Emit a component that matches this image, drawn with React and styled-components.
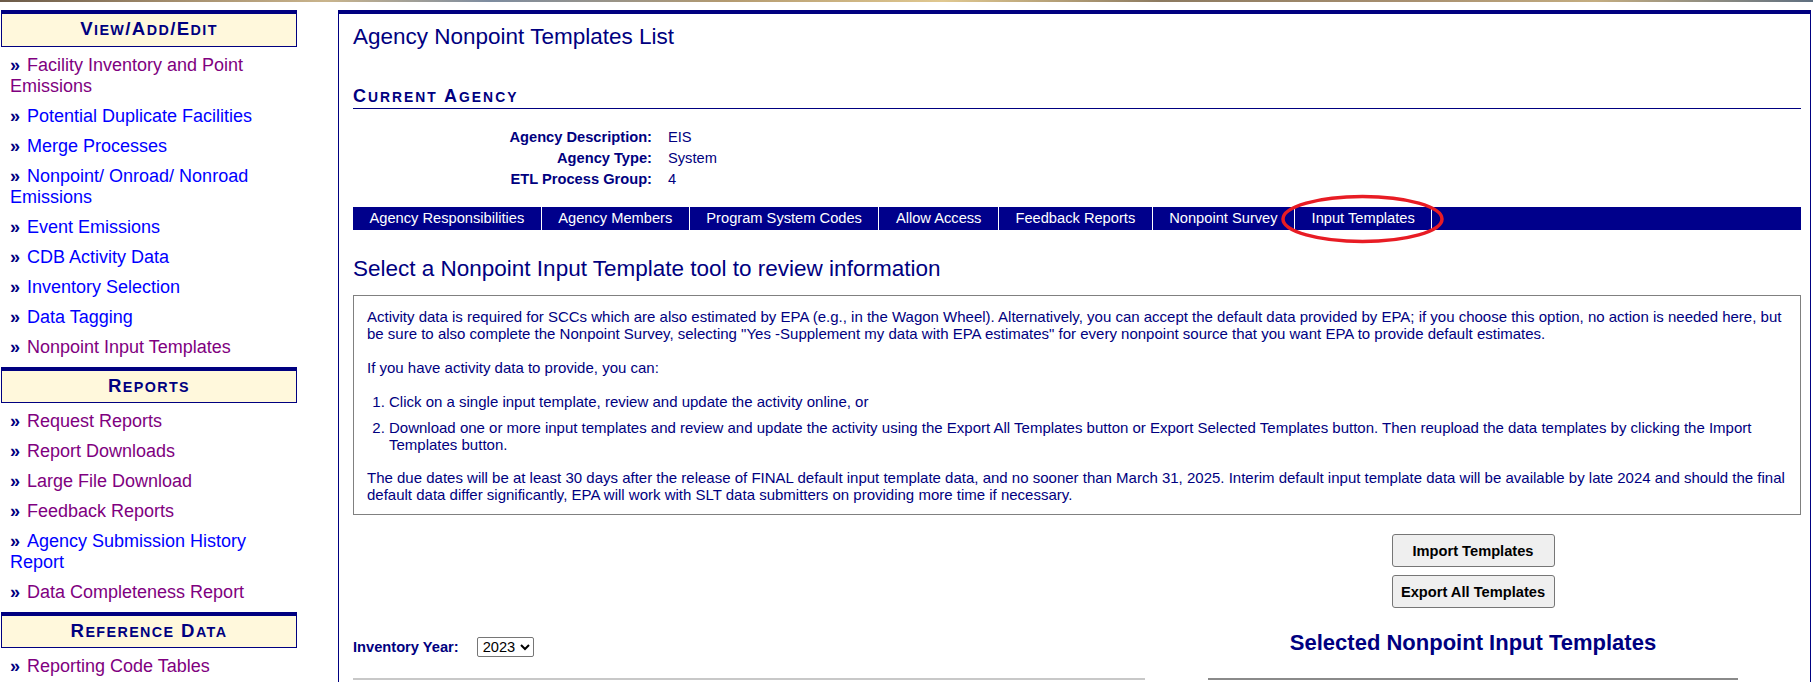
import React from "react";
import styled, { createGlobalStyle } from "styled-components";

const NAVY = "#000080";

const GlobalStyle = createGlobalStyle`
  html, body {
    margin: 0;
    padding: 0;
    background: #ffffff;
  }
  body {
    font-family: "Liberation Sans", Arial, sans-serif;
    color: ${NAVY};
  }
`;

const Banner = styled.div`
  height: 2px;
  background: linear-gradient(
    90deg,
    #6b5a48 0%,
    #a08a6a 9%,
    #c9b48c 18%,
    #7d8ca0 27%,
    #b39a70 40%,
    #e0c890 52%,
    #8c7a60 64%,
    #a89070 78%,
    #c4ad80 88%,
    #5f6f80 100%
  );
`;

const Page = styled.div`
  display: flex;
  align-items: stretch;
  gap: 41px;
  padding: 8px 2px 0 1px;
  min-height: calc(100vh - 10px);
`;

// lowercase runs are drawn as smaller capitals, like the site's small-caps headings
const Lower = styled.span`
  font-size: 0.77em;
  text-transform: uppercase;
`;

const SmallCaps = ({ text }) =>
  text
    .split(/([a-z]+)/)
    .map((part, i) =>
      /^[a-z]+$/.test(part) ? <Lower key={i}>{part}</Lower> : part
    );

/* ---------- sidebar ---------- */

const Sidebar = styled.nav`
  width: 296px;
  flex-shrink: 0;
`;

const SideHeader = styled.div`
  box-sizing: border-box;
  height: ${(p) => (p.$first ? "37px" : "36px")};
  border: 1px solid ${NAVY};
  border-top-width: 4px;
  background: #fff8dc;
  color: ${NAVY};
  font-weight: bold;
  font-size: 18.6px;
  letter-spacing: 1.4px;
  line-height: 30px;
  text-align: center;
`;

const LinkList = styled.ul`
  list-style: none;
  margin: 0;
  padding: 8px 0 0 9px;
`;

const LinkItem = styled.li`
  font-size: 18px;
  line-height: 21px;
  margin-bottom: 9px;
`;

const Bullet = styled.span`
  color: ${NAVY};
  font-weight: bold;
  margin-right: 7px;
`;

const SideLink = styled.a`
  color: ${(p) => (p.$visited ? "#800080" : "#0000ff")};
  text-decoration: none;
  cursor: pointer;
`;

/* ---------- main panel ---------- */

const Panel = styled.main`
  flex: 1;
  min-width: 0;
  border: 1px solid ${NAVY};
  border-top: 4px solid ${NAVY};
  border-bottom: none;
  padding: 10px 9px 0 14px;
`;

const PageTitle = styled.h1`
  margin: 0;
  font-size: 22.5px;
  font-weight: normal;
  line-height: 26px;
  color: ${NAVY};
`;

const SectionTitle = styled.h2`
  margin: 36px 0 0;
  padding-bottom: 1px;
  font-size: 18px;
  font-weight: bold;
  letter-spacing: 2px;
  line-height: 20px;
  color: ${NAVY};
  border-bottom: 1px solid ${NAVY};
`;

const InfoGrid = styled.dl`
  display: grid;
  grid-template-columns: 299px auto;
  column-gap: 16px;
  margin: 18px 0 0;
  font-size: 14.67px;
  line-height: 21px;
`;

const InfoLabel = styled.dt`
  font-weight: bold;
  text-align: right;
`;

const InfoValue = styled.dd`
  margin: 0;
`;

const TabBar = styled.div`
  display: flex;
  height: 23px;
  margin-top: 17px;
  background: #00008b;
`;

const Tab = styled.a`
  position: relative;
  padding: 0 16.5px;
  border-right: 1px solid #ffffff;
  color: #ffffff;
  font-size: 14.67px;
  line-height: 23px;
  white-space: nowrap;
  text-decoration: none;
  cursor: pointer;
`;

const Circle = styled.svg`
  position: absolute;
  left: -14px;
  top: -12px;
  width: 163px;
  height: 48px;
  overflow: visible;
  pointer-events: none;
`;

const ToolHeading = styled.h2`
  margin: 26px 0 0;
  font-size: 22.5px;
  font-weight: normal;
  line-height: 26px;
  color: ${NAVY};
`;

const InfoBox = styled.div`
  margin-top: 13px;
  padding: 12px 12px 11px 13px;
  border: 1px solid #808080;
  font-size: 15px;
  line-height: 17px;
  color: ${NAVY};
`;

const Para = styled.p`
  margin: 0 0 ${(p) => (p.$last ? "0" : "17px")};
`;

const Steps = styled.ol`
  margin: 0 0 16px;
  padding-left: 22px;

  li + li {
    margin-top: 9px;
  }
`;

const BottomRow = styled.div`
  display: grid;
  grid-template-columns: 1fr 530px;
  column-gap: 63px;
  align-items: end;
  margin-right: 63px;
`;

const LeftCol = styled.div`
  display: flex;
  flex-direction: column;
`;

const YearRow = styled.label`
  display: flex;
  align-items: center;
  height: 20px;
  font-size: 14.67px;
  font-weight: bold;
  color: ${NAVY};
`;

const YearSelect = styled.select`
  margin-left: 18px;
  height: 20px;
  padding: 0 1px;
  border: 1px solid #767676;
  border-radius: 2px;
  background: #ffffff;
  color: #000000;
  font-family: "Liberation Sans", Arial, sans-serif;
  font-size: 14.67px;
`;

const RightCol = styled.div`
  display: flex;
  flex-direction: column;
  align-items: center;
  padding-top: 19px;
`;

const ActionButton = styled.button`
  box-sizing: border-box;
  width: 163px;
  height: 33px;
  margin-bottom: ${(p) => (p.$last ? "0" : "8px")};
  border: 1px solid #767676;
  border-radius: 3px;
  background: #efefef;
  color: #000000;
  font-family: "Liberation Sans", Arial, sans-serif;
  font-size: 14.67px;
  font-weight: bold;
  cursor: pointer;
`;

const SelectedHeading = styled.h3`
  margin: 22px 0 0;
  font-size: 22px;
  font-weight: bold;
  line-height: 26px;
  color: ${NAVY};
`;

const TableTop = styled.div`
  align-self: stretch;
  height: 8px;
  margin-top: ${(p) => (p.$light ? "21px" : "22px")};
  border-top: 2px solid ${(p) => (p.$light ? "#c8c8c8" : "#8a8a8a")};
`;

const menu = [
  {
    title: "View/Add/Edit",
    links: [
      ["Facility Inventory and Point Emissions", true],
      ["Potential Duplicate Facilities", false],
      ["Merge Processes", false],
      ["Nonpoint/ Onroad/ Nonroad Emissions", false],
      ["Event Emissions", false],
      ["CDB Activity Data", false],
      ["Inventory Selection", false],
      ["Data Tagging", false],
      ["Nonpoint Input Templates", true],
    ],
  },
  {
    title: "Reports",
    links: [
      ["Request Reports", true],
      ["Report Downloads", true],
      ["Large File Download", true],
      ["Feedback Reports", true],
      ["Agency Submission History Report", false],
      ["Data Completeness Report", true],
    ],
  },
  {
    title: "Reference Data",
    links: [["Reporting Code Tables", true]],
  },
];

const tabs = [
  "Agency Responsibilities",
  "Agency Members",
  "Program System Codes",
  "Allow Access",
  "Feedback Reports",
  "Nonpoint Survey",
  "Input Templates",
];

export default function App() {
  return (
    <>
      <GlobalStyle />
      <Banner />
      <Page>
        <Sidebar>
          {menu.map((section, i) => (
            <React.Fragment key={section.title}>
              <SideHeader $first={i === 0}>
                <SmallCaps text={section.title} />
              </SideHeader>
              <LinkList>
                {section.links.map(([label, visited]) => (
                  <LinkItem key={label}>
                    <Bullet>»</Bullet>
                    <SideLink $visited={visited}>{label}</SideLink>
                  </LinkItem>
                ))}
              </LinkList>
            </React.Fragment>
          ))}
        </Sidebar>

        <Panel>
          <PageTitle>Agency Nonpoint Templates List</PageTitle>

          <SectionTitle>
            <SmallCaps text="Current Agency" />
          </SectionTitle>
          <InfoGrid>
            <InfoLabel>Agency Description:</InfoLabel>
            <InfoValue>EIS</InfoValue>
            <InfoLabel>Agency Type:</InfoLabel>
            <InfoValue>System</InfoValue>
            <InfoLabel>ETL Process Group:</InfoLabel>
            <InfoValue>4</InfoValue>
          </InfoGrid>

          <TabBar>
            {tabs.map((t) => (
              <Tab key={t}>
                {t}
                {t === "Input Templates" && (
                  <Circle viewBox="0 0 163 48">
                    <ellipse
                      cx="81.5"
                      cy="24"
                      rx="79.5"
                      ry="22.5"
                      fill="none"
                      stroke="#e81c24"
                      strokeWidth="3.5"
                    />
                  </Circle>
                )}
              </Tab>
            ))}
          </TabBar>

          <ToolHeading>
            Select a Nonpoint Input Template tool to review information
          </ToolHeading>

          <InfoBox>
            <Para>
              Activity data is required for SCCs which are also estimated by
              EPA (e.g., in the Wagon Wheel). Alternatively, you can accept the
              default data provided by EPA; if you choose this option, no action
              is needed here, but be sure to also complete the Nonpoint Survey,
              selecting "Yes -Supplement my data with EPA estimates" for every
              nonpoint source that you want EPA to provide default estimates.
            </Para>
            <Para>If you have activity data to provide, you can:</Para>
            <Steps>
              <li>
                Click on a single input template, review and update the activity
                online, or
              </li>
              <li>
                Download one or more input templates and review and update the
                activity using the Export All Templates button or Export
                Selected Templates button. Then reupload the data templates by
                clicking the Import Templates button.
              </li>
            </Steps>
            <Para $last>
              The due dates will be at least 30 days after the release of FINAL
              default input template data, and no sooner than March 31, 2025.
              Interim default input template data will be available by late 2024
              and should the final default data differ significantly, EPA will
              work with SLT data submitters on providing more time if necessary.
            </Para>
          </InfoBox>

          <BottomRow>
            <LeftCol>
              <YearRow>
                Inventory Year:
                <YearSelect defaultValue="2023">
                  <option value="2023">2023</option>
                  <option value="2022">2022</option>
                  <option value="2021">2021</option>
                  <option value="2020">2020</option>
                </YearSelect>
              </YearRow>
              <TableTop $light />
            </LeftCol>
            <RightCol>
              <ActionButton>Import Templates</ActionButton>
              <ActionButton $last>Export All Templates</ActionButton>
              <SelectedHeading>Selected Nonpoint Input Templates</SelectedHeading>
              <TableTop />
            </RightCol>
          </BottomRow>
        </Panel>
      </Page>
    </>
  );
}
